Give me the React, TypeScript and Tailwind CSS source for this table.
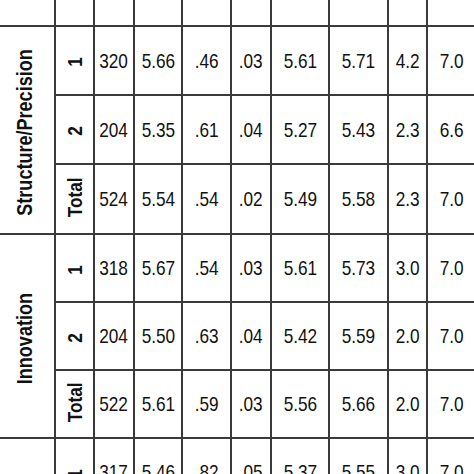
import React from 'react';

const groups = [
  {
    name: 'Structure/Precision',
    rows: [
      { t: '1', h: 'h-[69px]', v: ['320', '5.66', '.46', '.03', '5.61', '5.71', '4.2', '7.0'] },
      { t: '2', h: 'h-[68px]', v: ['204', '5.35', '.61', '.04', '5.27', '5.43', '2.3', '6.6'] },
      { t: 'Total', h: 'h-[70px]', v: ['524', '5.54', '.54', '.02', '5.49', '5.58', '2.3', '7.0'] },
    ],
  },
  {
    name: 'Innovation',
    rows: [
      { t: '1', h: 'h-[68px]', v: ['318', '5.67', '.54', '.03', '5.61', '5.73', '3.0', '7.0'] },
      { t: '2', h: 'h-[68px]', v: ['204', '5.50', '.63', '.04', '5.42', '5.59', '2.0', '7.0'] },
      { t: 'Total', h: 'h-[68px]', v: ['522', '5.61', '.59', '.03', '5.56', '5.66', '2.0', '7.0'] },
    ],
  },
  {
    name: '',
    rows: [
      { t: '1', h: 'h-[68px]', v: ['317', '5.46', '.82', '.05', '5.37', '5.55', '3.0', '7.0'] },
    ],
  },
];

const cell = 'border-2 border-[#3a3a3a] p-0 text-center align-middle';
// narrow type: the source table is set in a condensed face
const vert = 'inline-block [writing-mode:vertical-rl] rotate-180 scale-y-[0.82] font-bold';
const num = 'inline-block scale-x-[0.82] whitespace-nowrap';

export default function App() {
  return (
    <div className="w-[474px] h-[474px] overflow-hidden bg-white font-['Liberation_Sans',Arial,sans-serif] text-[#111111]">
      <table className="table-fixed border-collapse w-[481px] -ml-[6px] -mt-[75px] text-[21px] leading-none">
        <colgroup>
          <col className="w-[60px]" />
          <col className="w-[39px]" />
          <col className="w-[40px]" />
          <col className="w-[48px]" />
          <col className="w-[49px]" />
          <col className="w-[40px]" />
          <col className="w-[58px]" />
          <col className="w-[59px]" />
          <col className="w-[39px]" />
          <col className="w-[49px]" />
        </colgroup>
        <thead>
          <tr className="h-[100px]">
            <th className={cell}></th>
            <th className={`${cell} align-bottom pb-[11px]`}>
              <span className={vert}>Time</span>
            </th>
            {Array.from({ length: 8 }).map((_, i) => (
              <th key={i} className={cell}></th>
            ))}
          </tr>
        </thead>
        <tbody>
          {groups.map((g) =>
            g.rows.map((r, i) => (
              <tr key={g.name + r.t} className={r.h}>
                {i === 0 && (
                  <td rowSpan={g.rows.length} className={cell}>
                    {g.name && <span className={`${vert} translate-y-[4px] text-[22px]`}>{g.name}</span>}
                  </td>
                )}
                <td className={cell}>
                  <span className={vert}>{r.t}</span>
                </td>
                {r.v.map((x, j) => (
                  <td key={j} className={cell}>
                    <span className={num}>{x}</span>
                  </td>
                ))}
              </tr>
            ))
          )}
        </tbody>
      </table>
    </div>
  );
}
